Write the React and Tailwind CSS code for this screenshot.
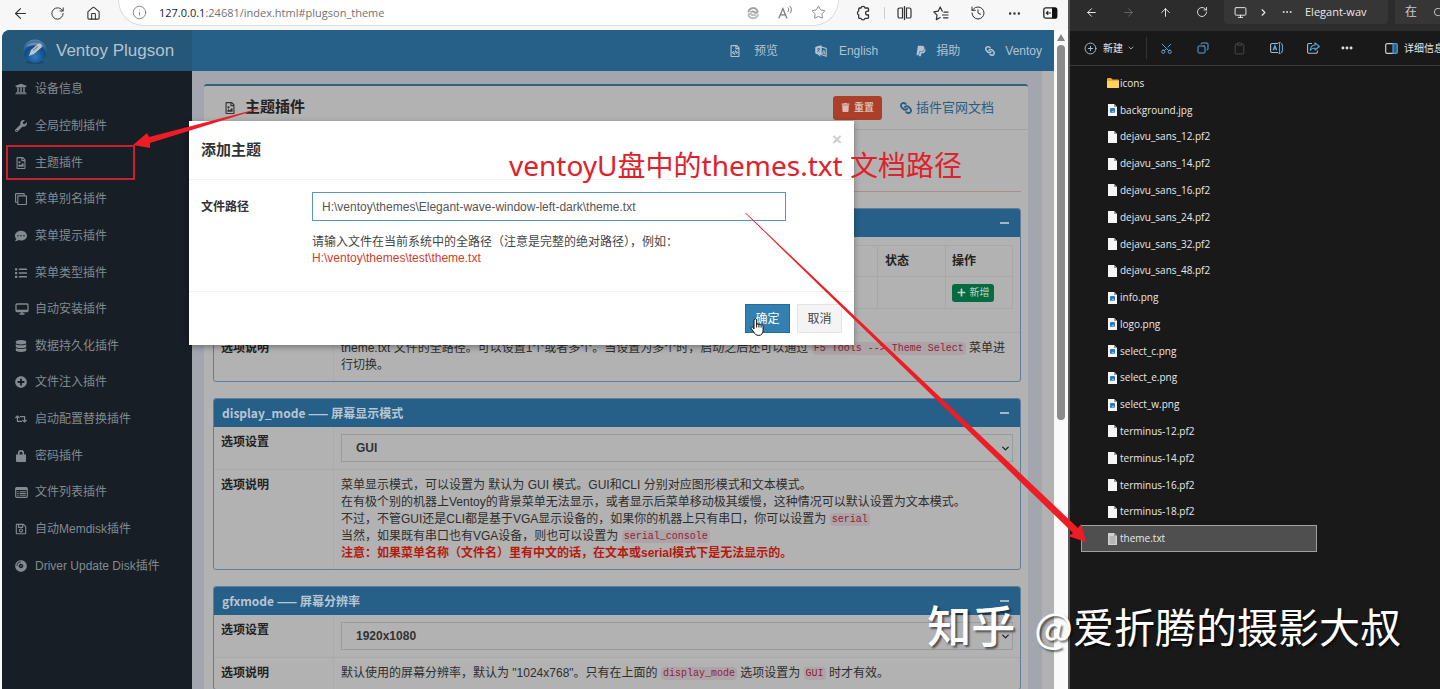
import React, { useState } from 'react';
import {
  FaCommentDots,
  FaCompactDisc,
  FaDatabase,
  FaLink,
  FaList,
  FaPaypal,
  FaPlus,
  FaPlusCircle,
  FaRegClone,
  FaRegFileCode,
  FaRegFileImage,
  FaRegSave,
  FaRetweet,
  FaTrash,
  FaUniversity,
  FaWrench,
} from 'react-icons/fa';
import {
  ArrowLeft,
  ArrowRight,
  ArrowUp,
  ChevronDown,
  ChevronRight,
  CirclePlus,
  Clipboard,
  Columns2,
  Copy,
  Ellipsis,
  History,
  House,
  Info,
  Monitor,
  RotateCw,
  Scissors,
  Search,
  Star,
} from 'lucide-react';

const DesktopIcon = () => (
  <svg viewBox="0 0 14 12" className="h-3 w-[14px]" fill="none" stroke="currentColor">
    <rect x="1" y="1" width="12" height="7.5" rx="1" strokeWidth="1.3" />
    <path d="M1 7.6h12M4.5 11h5M7 8.5V11" strokeWidth="1.6" />
  </svg>
);

const LockIcon = () => (
  <svg viewBox="0 0 12 12" className="h-3 w-3" fill="currentColor">
    <path d="M1 4.5h10V11a1 1 0 0 1-1 1H2a1 1 0 0 1-1-1z" />
    <path d="M3.7 5V3.200a2.300 2.300 0 0 1 4.600 0V5" fill="none" stroke="currentColor" strokeWidth="1.7" />
  </svg>
);

const ListAltIcon = () => (
  <svg viewBox="0 0 13 11" className="h-[11px] w-[13px]" fill="none" stroke="currentColor">
    <rect x="0.7" y="0.7" width="11.6" height="9.6" rx="1" strokeWidth="1.2" />
    <path d="M1 2h11" strokeWidth="2" />
    <path d="M2.2 4.7h1.4M4.6 4.7h6.2M2.2 6.5h1.4M4.6 6.5h6.2M2.2 8.3h1.4M4.6 8.3h6.2" strokeWidth="1.1" />
  </svg>
);

const LanguageIcon = () => (
  <svg viewBox="0 0 12 12" className="h-3 w-3" fill="none" stroke="currentColor">
    <path d="M0.8 2.2l5.4-1.4v9L0.8 8.4z" fill="currentColor" />
    <path d="M6.2 2l5 1.4v7.8l-5-1.6" strokeWidth="1.1" />
    <path d="M7.4 8.8l1.4-3.6 1.3 4.4M7.8 7.9l2 .5M3.2 9.6l2.4 1.7" strokeWidth="0.9" />
    <path d="M2 4.2l3-.5M3.5 3v1M2.2 7c1.2-.6 2-1.6 2.3-3.2M2.6 5l2 1.8" stroke="#265f87" strokeWidth="0.7" />
  </svg>
);

const menuItems = [
  { label: '设备信息', icon: <FaUniversity /> },
  { label: '全局控制插件', icon: <FaWrench /> },
  { label: '主题插件', icon: <FaRegFileImage />, active: true },
  { label: '菜单别名插件', icon: <FaRegClone className="-scale-y-100" /> },
  { label: '菜单提示插件', icon: <FaCommentDots /> },
  { label: '菜单类型插件', icon: <FaList /> },
  { label: '自动安装插件', icon: <DesktopIcon /> },
  { label: '数据持久化插件', icon: <FaDatabase /> },
  { label: '文件注入插件', icon: <FaPlusCircle /> },
  { label: '启动配置替换插件', icon: <FaRetweet /> },
  { label: '密码插件', icon: <LockIcon /> },
  { label: '文件列表插件', icon: <ListAltIcon /> },
  { label: '自动Memdisk插件', icon: <FaRegSave /> },
  { label: 'Driver Update Disk插件', icon: <FaCompactDisc /> },
];

const files = [
  'icons',
  'background.jpg',
  'dejavu_sans_12.pf2',
  'dejavu_sans_14.pf2',
  'dejavu_sans_16.pf2',
  'dejavu_sans_24.pf2',
  'dejavu_sans_32.pf2',
  'dejavu_sans_48.pf2',
  'info.png',
  'logo.png',
  'select_c.png',
  'select_e.png',
  'select_w.png',
  'terminus-12.pf2',
  'terminus-14.pf2',
  'terminus-16.pf2',
  'terminus-18.pf2',
  'theme.txt',
];

const BrowserBar = () => (
  <div className="flex h-[30px] shrink-0 items-start bg-[#f7f7f7] pl-3 text-[#333]">
    <div className="flex h-[26px] w-[106px] items-center gap-[21px]">
      <button type="button" aria-label="Back"><ArrowLeft size={17} strokeWidth={1.5} /></button>
      <button type="button" aria-label="Refresh"><RotateCw size={15} strokeWidth={1.6} /></button>
      <button type="button" aria-label="Home"><House size={15} strokeWidth={1.7} /></button>
    </div>
    <div className="flex h-[26px] min-w-0 flex-1 items-center rounded-b-full border border-t-0 border-[#dcdcdc] bg-white pr-3 pl-[13px]">
      <Info size={15} strokeWidth={1.4} className="shrink-0 text-[#777]" />
      <span className="mt-px ml-3 flex-1 truncate font-['Open_Sans'] text-[11px] text-[#717171]">
        <span className="text-[#1c1c1c]">127.0.0.1</span>:24681/index.html#plugson_theme
      </span>
      <div className="flex shrink-0 items-center gap-[18px] text-[#777]">
        <svg viewBox="0 0 14 14" className="h-[14px] w-[14px]" fill="none" strokeLinecap="round">
          <path d="M2.500 5.500C3.500 1.800 8.500.8 11 4c1.300 2.200-.6 3.600-2 2.400C7.800 5.300 6.600 5.200 5.200 5.800" stroke="#a5a5a5" strokeWidth="2" />
          <path d="M11.800 9C10.500 12.800 5.500 13.200 3 10.400 1.800 8.400 3.600 7 5 8.200c1.200 1 2.600 1.200 4 .6" stroke="#bbb" strokeWidth="2" />
        </svg>
        <svg viewBox="0 0 15 14" className="h-[14px] w-[15px]" fill="none" stroke="currentColor" strokeLinecap="round">
          <path d="M1 12L4.900 2.500 8.800 12M2.300 8.800h5.200" strokeWidth="1.2" />
          <path d="M10 1.800c.9 1.200.9 2.600 0 3.800M12.200.5c1.700 2 1.700 4.600 0 6.400" strokeWidth="1" />
        </svg>
        <Star size={15} strokeWidth={1.4} />
      </div>
    </div>
    <div className="flex h-[26px] shrink-0 items-center gap-[21px] pr-[10px] pl-4">
      <svg viewBox="0 0 16 16" className="h-4 w-4" fill="none" stroke="currentColor" strokeWidth="1.3" strokeLinejoin="round">
        <path d="M5.200 3H6a2.100 2.100 0 0 1 4.100 0h2.400a1 1 0 0 1 1 1v2.200h-1a1.900 1.900 0 0 0 0 3.800h1v2.400a1 1 0 0 1-1 1H10a2.100 2.100 0 0 1-4 0H4.700a1 1 0 0 1-1-1V10a2.200 2.200 0 0 1 0-4V4a1 1 0 0 1 1-1z" />
      </svg>
      <div className="flex items-center gap-3">
        <span className="-ml-2 h-3 w-px bg-[#ccc]" />
        <svg viewBox="0 0 15 14" className="h-[14px] w-[15px]" fill="none" stroke="currentColor" strokeWidth="1.2">
          <path d="M5.500 2H2.600A1.600 1.600 0 0 0 1 3.600v6.800A1.600 1.600 0 0 0 2.600 12h2.900zM9.500 2h2.900A1.600 1.600 0 0 1 14 3.600v6.800a1.600 1.600 0 0 1-1.600 1.600H9.500zM7.500 0v14" />
        </svg>
      </div>
      <svg viewBox="0 0 16 15" className="h-[15px] w-4" fill="none" stroke="currentColor" strokeWidth="1.2" strokeLinecap="round" strokeLinejoin="round">
        <path d="M9.300 5.200L7.200 1 5.200 5.200.8 5.900 4 9.100 3.300 13.600 7.200 11.500M11 6.200h4M9.500 9h5.500M10.500 11.800h4.500" />
      </svg>
      <History size={16} strokeWidth={1.5} />
      <Ellipsis size={15} strokeWidth={2} />
      <svg viewBox="0 0 15 12" className="h-3 w-[15px]">
        <rect x="0.8" y="0.8" width="13" height="10.400" rx="2" fill="none" stroke="#222" strokeWidth="1.300" />
        <path d="M9 .8h3.500a1.500 1.500 0 0 1 1.500 1.500v7.400a1.500 1.500 0 0 1-1.500 1.500H9z" fill="#111" />
        <path d="M8 6H3.500M5.200 4.200L3.400 6l1.800 1.800" fill="none" stroke="#222" strokeWidth="1.200" />
      </svg>
    </div>
  </div>
);

const Header = () => (
  <header className="flex h-[41px] shrink-0 bg-[#265f87] text-[#b4c3d0]">
    <a href="#home" className="flex w-[190px] items-center gap-2 bg-[#245778] pl-5">
      <svg viewBox="0 0 26 26" className="h-[26px] w-[26px]">
        <defs>
          <radialGradient id="orb" cx="50%" cy="75%" r="75%">
            <stop offset="0" stopColor="#2f7dc0" />
            <stop offset="0.600" stopColor="#0f4a86" />
            <stop offset="1" stopColor="#5b86ad" />
          </radialGradient>
        </defs>
        <ellipse cx="13" cy="24" rx="9" ry="2" fill="#123d63" opacity="0.500" />
        <circle cx="13" cy="13" r="11.500" fill="url(#orb)" />
        <path d="M4 9a10 8 0 0 1 18 0c-5-2-13-2-18 0z" fill="#8fabc4" opacity="0.600" />
        <path d="M7 18l2-6 7-6c2-1.500 5 .5 3.500 3.500L12 16z" fill="#bcc6cf" />
        <path d="M11 12.500l5-4" stroke="#7c8fa0" strokeWidth="1.200" />
      </svg>
      <span className="text-[17px]">Ventoy Plugson</span>
    </a>
    <nav className="flex flex-1 items-center justify-end pr-3 text-xs">
      <a href="#preview" className="flex items-center gap-[13px]"><FaRegFileCode size={12} />预览</a>
      <a href="#english" className="ml-[37px] flex items-center gap-3"><LanguageIcon />English</a>
      <a href="#donate" className="ml-[37px] flex items-center gap-[9px]"><FaPaypal size={12} />捐助</a>
      <a href="#ventoy" className="ml-[25px] flex items-center gap-[10px]"><FaLink size={10} className="rotate-90" />Ventoy</a>
    </nav>
  </header>
);

const Sidebar = () => (
  <aside className="w-[190px] shrink-0 bg-[#181e25] text-[#818b90]">
    <ul className="grid h-[513px] auto-rows-fr">
      {menuItems.map((item) => (
        <li key={item.label} className="flex px-1 py-px">
          <a
            href="#plugin"
            className={`flex w-[129px] items-center gap-[6px] border-2 pl-[7px] text-xs whitespace-nowrap ${
              item.active ? 'border-[#c9202b]' : 'border-transparent'
            }`}
          >
            <span className="flex w-[14px] shrink-0 justify-start text-[12px]">{item.icon}</span>
            {item.label}
          </a>
        </li>
      ))}
    </ul>
  </aside>
);

const Code = ({ children }) => (
  <code className="rounded-sm bg-[#aea3a7] px-[2px] py-px align-top font-['Liberation_Mono',monospace] text-[10px] text-[#8b1f3b]">
    {children}
  </code>
);

const Panel = ({ title, children }) => (
  <section className="overflow-hidden rounded-[3px] border border-[#5f7f9c]">
    <h3 className="-mx-px -mt-px flex h-[29px] items-center justify-between bg-[#265f87] px-[9px] font-['Noto_Sans_CJK_SC',sans-serif] text-xs font-bold text-[#b9c6d2]">
      {title}
      <button type="button" aria-label="Collapse" className="mr-[3px] h-[2px] w-[9px] bg-[#a5b8c8]" />
    </h3>
    {children}
  </section>
);

const Row = ({ label, htmlFor, children, last }) => (
  <div className={`flex text-xs leading-[17px] ${last ? '' : 'border-b border-[#a9a9a9]'}`}>
    <label htmlFor={htmlFor} className="w-[120px] shrink-0 border-r border-[#acacac] px-[7px] py-[7px] font-bold text-[#222]">
      {label}
    </label>
    <div className="min-w-0 flex-1 px-[7px] py-[7px] text-[#2e2e2e]">{children}</div>
  </div>
);

const Select = ({ id, value }) => (
  <div className="relative">
    <select id={id} className="block h-7 w-full appearance-none border border-[#989ba0] bg-transparent px-[14px] text-xs font-bold text-[#333]">
      <option>{value}</option>
    </select>
    <ChevronDown size={11} strokeWidth={3} className="pointer-events-none absolute top-[9px] right-[2px] text-[#222]" />
  </div>
);

const Content = () => (
  <main className="min-w-0 flex-1 overflow-hidden border-r-[12px] border-[#b1b1b2] bg-[#a4a6ae] pt-[13px] pr-[14px] pl-3">
    <div className="rounded-t-[3px] border-t-2 border-[#365f7a] bg-[#b2b2b2] pb-4">
      <div className="flex h-11 items-center border-b border-[#a4a4a4] pr-[34px] pl-5">
        <FaRegFileImage size={12} className="text-[#333]" />
        <h1 className="ml-[9px] flex-1 text-[15px] font-bold text-[#222]">主题插件</h1>
        <button type="button" className="flex h-6 items-center gap-1 rounded-[3px] bg-[#ab3f28] px-2 text-[10px] font-bold text-[#d8bdb6]">
          <FaTrash size={9} />重置
        </button>
        <a href="#docs" className="ml-[18px] flex items-center gap-1 text-[13px] text-[#285e85]">
          <FaLink size={12} className="rotate-90" />插件官网文档
        </a>
      </div>
      <div className="pt-[61px] pr-[7px] pl-[9px]">
        <div className="flex flex-col gap-4 border-t border-[#a58e8e] pt-4">
          <Panel title="theme —— 主题设置">
            <Row label="选项设置">
              <table className="mt-px mb-4 w-full border border-[#a8a8a8] text-left text-xs text-[#222]">
                <thead>
                  <tr className="h-[31px]">
                    <th className="border border-[#a8a8a8] px-2">文件路径</th>
                    <th className="w-[68px] border border-[#a8a8a8] px-[7px]">状态</th>
                    <th className="w-[67px] border border-[#a8a8a8] px-[6px]">操作</th>
                  </tr>
                </thead>
                <tbody>
                  <tr className="h-8">
                    <td className="border border-[#a8a8a8]" />
                    <td className="border border-[#a8a8a8]" />
                    <td className="border border-[#a8a8a8] px-[6px]">
                      <button type="button" className="flex h-[18px] w-[42px] items-center justify-center gap-1 rounded-[3px] bg-[#066b41] text-[10px] text-[#bcd2c8]">
                        <FaPlus size={9} />新增
                      </button>
                    </td>
                  </tr>
                </tbody>
              </table>
            </Row>
            <Row label="选项说明" last>
              theme.txt 文件的全路径。可以设置1个或者多个。当设置为多个时，启动之后还可以通过 <Code>F5 Tools --&gt; Theme Select</Code> 菜单进行切换。
            </Row>
          </Panel>

          <Panel title="display_mode —— 屏幕显示模式">
            <Row label="选项设置" htmlFor="display-mode">
              <Select id="display-mode" value="GUI" />
            </Row>
            <Row label="选项说明" last>
              <p>菜单显示模式，可以设置为 默认为 GUI 模式。GUI和CLI 分别对应图形模式和文本模式。</p>
              <p>在有极个别的机器上Ventoy的背景菜单无法显示，或者显示后菜单移动极其缓慢，这种情况可以默认设置为文本模式。</p>
              <p>不过，不管GUI还是CLI都是基于VGA显示设备的，如果你的机器上只有串口，你可以设置为 <Code>serial</Code></p>
              <p>当然，如果既有串口也有VGA设备，则也可以设置为 <Code>serial_console</Code></p>
              <p className="font-bold text-[#b51a10]">注意：如果菜单名称（文件名）里有中文的话，在文本或serial模式下是无法显示的。</p>
            </Row>
          </Panel>

          <Panel title="gfxmode —— 屏幕分辨率">
            <Row label="选项设置" htmlFor="gfxmode">
              <Select id="gfxmode" value="1920x1080" />
            </Row>
            <Row label="选项说明" last>
              默认使用的屏幕分辨率，默认为 "1024x768"。只有在上面的 <Code>display_mode</Code> 选项设置为 <Code>GUI</Code> 时才有效。
            </Row>
          </Panel>
        </div>
      </div>
    </div>
  </main>
);

const HandCursor = () => (
  <svg viewBox="0 0 14 18" className="absolute top-[13px] left-1 h-[18px] w-[14px]" fill="#fff" stroke="#111" strokeWidth="1" strokeLinejoin="round">
    <path d="M4 11V2.200C4 .3 6.600.3 6.600 2.200V7c0-1.400 2.300-1.300 2.300.2 0-1.200 2.200-1.100 2.200.3 0-1 2-.9 2 .6V12c0 3.300-1.600 5.400-4.300 5.400-2.800 0-4-1.300-5.200-3.600L1.200 10.500c-.8-1.500.8-2.300 1.700-1.200z" />
    <path d="M6.600 7v2.500M8.900 7.200v2.300M11.100 7.600v2" fill="none" />
  </svg>
);

const ThemeDialog = () => {
  const [path, setPath] = useState('H:\\ventoy\\themes\\Elegant-wave-window-left-dark\\theme.txt');

  return (
    <div role="dialog" aria-label="添加主题" className="absolute top-[91px] left-[187px] w-[665px] bg-white shadow-[0_2px_6px_rgba(0,0,0,0.35)]">
      <div className="relative flex h-[59px] items-center border-b border-[#f2f2f2] px-3">
        <h2 className="text-[15px] font-bold text-[#333]">添加主题</h2>
        <button type="button" aria-label="Close" className="absolute top-[9px] right-3 text-[17px] leading-5 font-bold text-[#ccc]">×</button>
      </div>
      <div className="flex h-[112px] border-b border-[#f2f2f2] px-3 pt-3 text-xs leading-4">
        <label htmlFor="theme-path" className="w-[111px] shrink-0 pt-[7px] font-bold text-[#333]">文件路径</label>
        <div>
          <input
            id="theme-path"
            type="text"
            value={path}
            onChange={(event) => setPath(event.target.value)}
            className="block h-[29px] w-[474px] border border-[#5b97bd] px-[9px] text-xs text-[#555] outline-none"
          />
          <p className="mt-[13px] text-[#444]">请输入文件在当前系统中的全路径（注意是完整的绝对路径），例如：</p>
          <p className="text-[#cf4029]">H:\ventoy\themes\test\theme.txt</p>
        </div>
      </div>
      <div className="flex justify-end gap-[7px] p-3 text-xs">
        <button type="button" className="relative h-[29px] w-[45px] border border-[#2a6a94] bg-[#327fb2] text-white">
          确定
          <HandCursor />
        </button>
        <button type="button" className="h-[29px] w-[45px] border border-[#e4e4e4] bg-[#f4f4f4] text-[#444]">取消</button>
      </div>
    </div>
  );
};

const Browser = () => (
  <div className="flex min-w-0 flex-1 flex-col border-r-2 border-[#555] bg-[#fafafa] font-['Liberation_Sans','Noto_Sans_CJK_SC',sans-serif]">
    <BrowserBar />
    <div className="flex min-h-0 flex-1 pl-[2px]">
      <div className="relative flex min-w-0 flex-1 flex-col overflow-hidden rounded-tl-lg">
        <Header />
        <div className="flex min-h-0 flex-1">
          <Sidebar />
          <Content />
        </div>
        <ThemeDialog />
      </div>
      <div className="flex w-[14px] flex-col items-center gap-1 pt-1">
        <svg viewBox="0 0 8 7" className="h-[7px] w-2"><path d="M4 0l4 7H0z" fill="#858585" /></svg>
        <div className="h-[375px] w-2 rounded-full bg-[#8b8b8b]" />
      </div>
    </div>
  </div>
);

const FileIcon = ({ name }) => {
  if (name === 'icons') {
    return (
      <svg viewBox="0 0 12 10" className="h-[10px] w-3">
        <path d="M0 1a1 1 0 0 1 1-1h3l1.500 1.500H11a1 1 0 0 1 1 1V9a1 1 0 0 1-1 1H1a1 1 0 0 1-1-1z" fill="#e9a92c" />
        <path d="M0 3h12v6a1 1 0 0 1-1 1H1a1 1 0 0 1-1-1z" fill="#ffd25a" />
      </svg>
    );
  }

  const isText = name.endsWith('.txt');
  return (
    <svg viewBox="0 0 9 12" className="h-3 w-[9px]">
      <path d="M0 0h6l3 3v9H0z" fill={isText ? '#d0d0d0' : '#f5f5f5'} />
      <path d="M6 0v3h3z" fill="#999" />
      {isText && <path d="M1.500 4h6M1.500 6h6M1.500 8h6M1.500 10h6" stroke="#909090" strokeWidth="0.800" />}
      {/\.(png|jpg)$/.test(name) && (
        <>
          <rect x="2" y="4" width="5" height="5" rx="1" fill="#2f78bd" />
          <path d="M3 8.500l2-2 2 2" fill="#8cc4ef" />
        </>
      )}
    </svg>
  );
};

const Explorer = () => (
  <div className="flex w-[370px] shrink-0 flex-col overflow-hidden bg-[#191919] font-['Open_Sans','Noto_Sans_CJK_SC',sans-serif] text-[#e8e8e8]">
    <div className="flex h-[31px] shrink-0 items-start bg-[#2c2c2c]">
      <div className="flex h-6 w-[154px] shrink-0 items-center gap-6 pl-[15px]">
        <ArrowLeft size={13} strokeWidth={1.8} className="shrink-0" />
        <ArrowRight size={13} strokeWidth={1.8} className="shrink-0 text-[#666]" />
        <ArrowUp size={13} strokeWidth={1.8} className="shrink-0" />
        <RotateCw size={12} strokeWidth={1.8} className="shrink-0" />
      </div>
      <div className="flex h-6 w-[164px] shrink-0 items-center rounded-b-sm bg-[#363636] pl-[10px] text-[11px]">
        <Monitor size={13} strokeWidth={1.8} />
        <ChevronRight size={11} strokeWidth={2.5} className="ml-[11px]" />
        <Ellipsis size={12} className="ml-3" />
        <span className="ml-3">Elegant-wav</span>
      </div>
      <div className="ml-[7px] flex h-6 flex-1 items-center justify-between bg-[#363636] pl-[10px] text-xs text-[#ccc]">
        在
        <Search size={11} className="-mr-1" />
      </div>
    </div>
    <div className="flex h-[35px] shrink-0 items-center border-b border-[#3a3a3a] pl-[14px] text-[11px] whitespace-nowrap">
      <CirclePlus size={13} strokeWidth={1.7} className="shrink-0 text-[#a9c6da]" />
      <span className="ml-[6px] text-[10px]">新建</span>
      <ChevronDown size={8} className="ml-1 shrink-0" />
      <span className="ml-[11px] h-[22px] w-px shrink-0 bg-[#333]" />
      <div className="ml-[13px] flex items-center gap-6 text-[#5aa6d8]">
        <Scissors size={13} strokeWidth={1.8} className="-rotate-90" />
        <Copy size={12} strokeWidth={2} className="-scale-x-100" />
        <Clipboard size={13} strokeWidth={1.8} className="text-[#4a4a4a]" />
        <svg viewBox="0 0 13 12" className="h-3 w-[13px]" fill="none" stroke="currentColor" strokeWidth="1.1">
          <path d="M8 1.500H2a1.400 1.400 0 0 0-1.400 1.400v6.200A1.400 1.400 0 0 0 2 10.500h6" stroke="#a5bccb" />
          <path d="M9.500.5v11M8.300.5h2.400M8.300 11.500h2.400M11 1.700c1 0 1.400.6 1.400 1.400v6c0 .8-.4 1.300-1.400 1.300M3 8.300l1.900-4.800 1.900 4.800M3.600 6.900h2.600" />
        </svg>
        <svg viewBox="0 0 13 12" className="h-3 w-[13px]" fill="none" stroke="currentColor" strokeWidth="1.1" strokeLinejoin="round">
          <path d="M5 1.500H2A1.400 1.400 0 0 0 .6 2.900v7A1.400 1.400 0 0 0 2 11.300h7a1.400 1.400 0 0 0 1.400-1.400V8.500" stroke="#a5bccb" />
          <path d="M8 .8l4.300 3.700L8 8V6C5.800 6 4.400 6.700 3.300 8.300 3.500 5.300 5 3.200 8 3z" />
        </svg>
        <Ellipsis size={14} strokeWidth={3} className="-ml-1 text-[#e8e8e8]" />
      </div>
      <svg viewBox="0 0 13 11" className="ml-[31px] h-[11px] w-[13px] shrink-0" fill="none" strokeWidth="1.2">
        <path d="M8 .7H2A1.300 1.300 0 0 0 .7 2v7A1.300 1.300 0 0 0 2 10.300h6" stroke="#ccc" />
        <path d="M8 .7h3A1.300 1.300 0 0 1 12.300 2v7a1.300 1.300 0 0 1-1.300 1.300H8z" stroke="#4a9dd6" fill="#25618c" />
      </svg>
      <span className="ml-[6px] text-[10px]">详细信息</span>
    </div>
    <ul className="mt-1 ml-[11px] grid h-[482px] w-[236px] auto-rows-fr text-[10px]">
      {files.map((name) => (
        <li
          key={name}
          className={`flex items-center border pl-[23px] ${
            name === 'theme.txt' ? 'border-[#a0a0a0] bg-[#4f4f4f]' : 'border-transparent'
          }`}
        >
          <span className="flex w-[15px] justify-center"><FileIcon name={name} /></span>
          {name}
        </li>
      ))}
    </ul>
  </div>
);

const Annotations = () => (
  <>
    <svg viewBox="0 0 1440 689" className="pointer-events-none absolute top-0 left-0 h-[689px] w-[1440px]" fill="#ee1c25">
      <path d="M269 106L149 137 147 133 133 145 150 148 150 143z" />
      <path d="M746 213L1078 528 1081 524 1086 542 1068 536 1073 533 745 213z" />
    </svg>
    <p className="pointer-events-none absolute top-[145px] left-[509px] font-['Noto_Sans','Noto_Sans_CJK_SC',sans-serif] text-[28px] leading-10 whitespace-nowrap text-[#e0202b]">
      ventoyU盘中的themes.txt 文档路径
    </p>
    <p className="pointer-events-none absolute top-[595px] right-[39px] flex items-baseline gap-[19px] font-['Noto_Sans_CJK_SC',sans-serif] text-[41px] leading-[58px] whitespace-nowrap text-white [text-shadow:2px_2px_2px_rgba(0,0,0,0.55)]">
      <span className="text-[44px] font-medium">知乎</span>
      <span>@爱折腾的摄影大叔</span>
    </p>
  </>
);

const App = () => (
  <div className="relative flex h-screen overflow-hidden">
    <Browser />
    <Explorer />
    <Annotations />
  </div>
);

export default App;
